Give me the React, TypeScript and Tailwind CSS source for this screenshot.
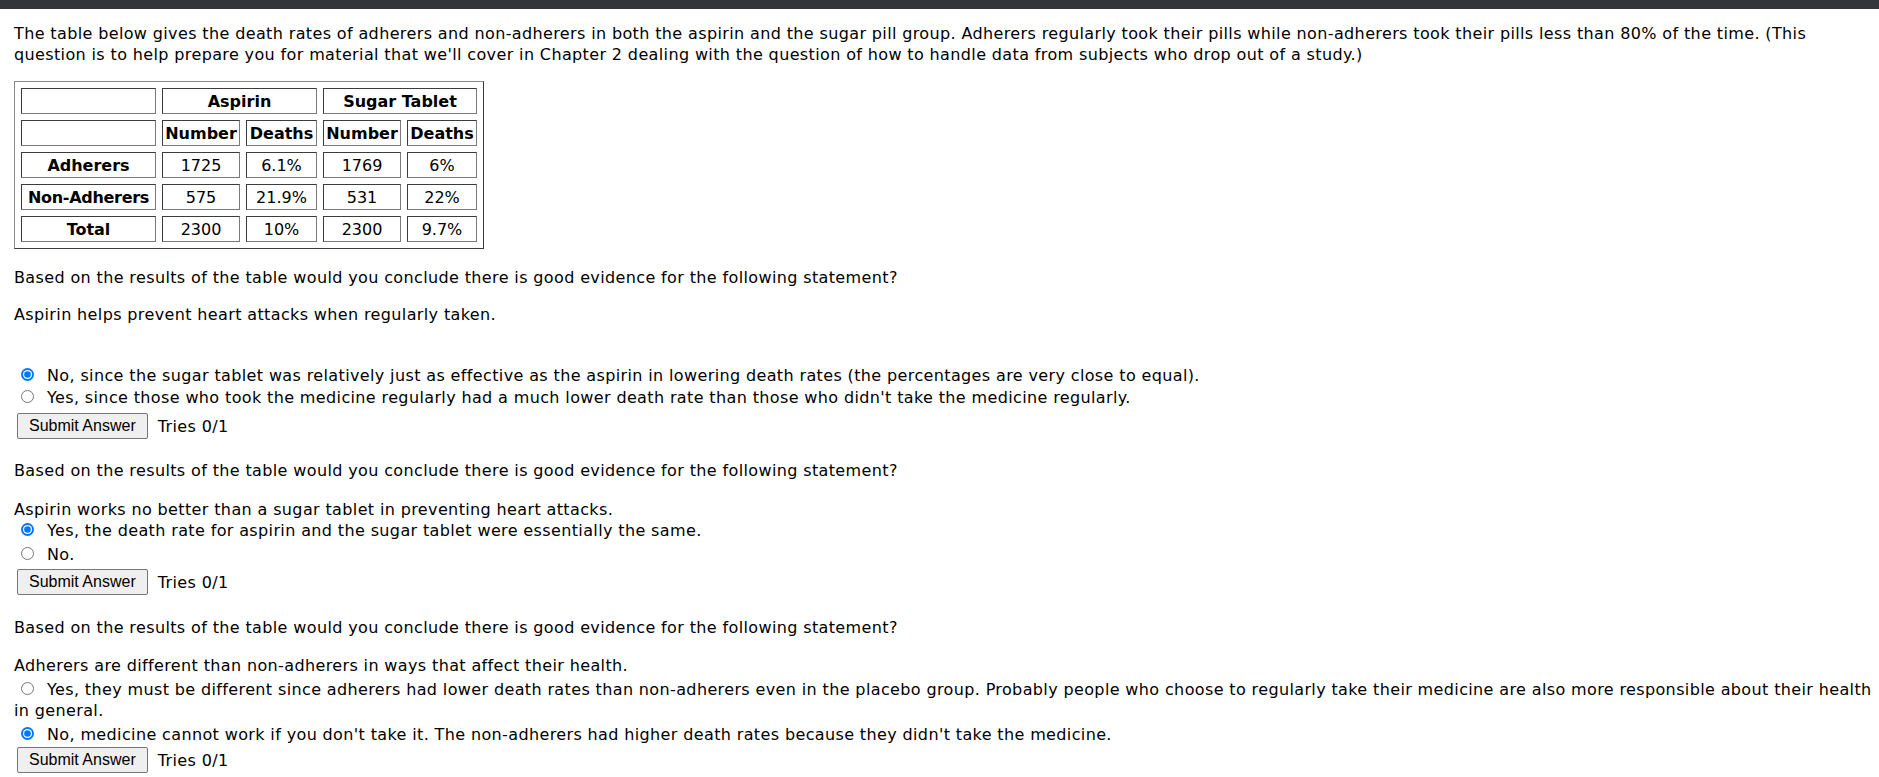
import React from "react";

function Radio({ checked }: { checked?: boolean }) {
  return (
    <span className="inline-block align-baseline w-[13px] h-[13px] ml-[7px] mr-[13px]">
      <svg width="13" height="13" viewBox="0 0 13 13" className="block">
        {checked ? (
          <>
            <circle cx="6.5" cy="6.5" r="6.5" fill="#0075ff" />
            <circle cx="6.5" cy="6.5" r="4.6" fill="#ffffff" />
            <circle cx="6.5" cy="6.5" r="3.3" fill="#0075ff" />
          </>
        ) : (
          <circle cx="6.5" cy="6.5" r="6" fill="#ffffff" stroke="#767676" strokeWidth="1" />
        )}
      </svg>
    </span>
  );
}

function SubmitRow({ className }: { className: string }) {
  return (
    <div className={`flex items-center ${className}`}>
      <button className="ml-[3px] h-[26px] px-[11px] bg-[#efefef] border border-[#767676] rounded-[2px] font-['Liberation_Sans',Arial,sans-serif] text-[16px] leading-none tracking-normal text-black">
        Submit Answer
      </button>
      <span className="ml-[10px]">Tries 0/1</span>
    </div>
  );
}

function Cell({
  children,
  bold,
  span,
}: {
  children?: React.ReactNode;
  bold?: boolean;
  span?: boolean;
}) {
  return (
    <div
      className={`h-[26px] flex items-center justify-center whitespace-nowrap border border-[#3c3c3c] border-r-[#7a7a7a] border-b-[#7a7a7a] ${
        bold ? "font-bold" : ""
      } ${span ? "col-span-2" : ""}`}
    >
      {children}
    </div>
  );
}

export default function App() {
  return (
    <div className="min-h-[777px] bg-white text-black font-['DejaVu_Sans',Verdana,sans-serif] text-[16px] leading-[21px] tracking-[0.37px]">
      <div className="h-[9px] bg-[#35363a]" />
      <div className="pl-[14px] pr-[4px]">
        <p className="mt-[14px]">
          The table below gives the death rates of adherers and non-adherers in both the aspirin and the sugar pill group. Adherers regularly took their pills while non-adherers took their pills less than 80% of the time. (This
          <br />
          question is to help prepare you for material that we'll cover in Chapter 2 dealing with the question of how to handle data from subjects who drop out of a study.)
        </p>

        <div className="mt-[16px] grid w-fit tracking-normal grid-cols-[135px_78px_71px_78px_70px] gap-[6px] p-[6px] border border-[#8a8a8a] border-r-[#3c3c3c] border-b-[#3c3c3c]">
          <Cell />
          <Cell bold span>
            Aspirin
          </Cell>
          <Cell bold span>
            Sugar Tablet
          </Cell>

          <Cell />
          <Cell bold>Number</Cell>
          <Cell bold>Deaths</Cell>
          <Cell bold>Number</Cell>
          <Cell bold>Deaths</Cell>

          <Cell bold>Adherers</Cell>
          <Cell>1725</Cell>
          <Cell>6.1%</Cell>
          <Cell>1769</Cell>
          <Cell>6%</Cell>

          <Cell bold>
            <span className="tracking-[-0.3px]">Non-Adherers</span>
          </Cell>
          <Cell>575</Cell>
          <Cell>21.9%</Cell>
          <Cell>531</Cell>
          <Cell>22%</Cell>

          <Cell bold>Total</Cell>
          <Cell>2300</Cell>
          <Cell>10%</Cell>
          <Cell>2300</Cell>
          <Cell>9.7%</Cell>
        </div>

        {/* Question 1 */}
        <p className="mt-[18px]">
          Based on the results of the table would you conclude there is good evidence for the following statement?
        </p>
        <p className="mt-[16px]">Aspirin helps prevent heart attacks when regularly taken.</p>
        <div className="mt-[40px]">
          <Radio checked />
          No, since the sugar tablet was relatively just as effective as the aspirin in lowering death rates (the percentages are very close to equal).
        </div>
        <div className="mt-[1px]">
          <Radio />
          Yes, since those who took the medicine regularly had a much lower death rate than those who didn't take the medicine regularly.
        </div>
        <SubmitRow className="mt-[5px]" />

        {/* Question 2 */}
        <p className="mt-[21px]">
          Based on the results of the table would you conclude there is good evidence for the following statement?
        </p>
        <p className="mt-[18px]">Aspirin works no better than a sugar tablet in preventing heart attacks.</p>
        <div>
          <Radio checked />
          Yes, the death rate for aspirin and the sugar tablet were essentially the same.
        </div>
        <div className="mt-[3px]">
          <Radio />
          No.
        </div>
        <SubmitRow className="mt-[4px]" />

        {/* Question 3 */}
        <p className="mt-[22px]">
          Based on the results of the table would you conclude there is good evidence for the following statement?
        </p>
        <p className="mt-[17px]">Adherers are different than non-adherers in ways that affect their health.</p>
        <div className="mt-[3px]">
          <Radio />
          Yes, they must be different since adherers had lower death rates than non-adherers even in the placebo group. Probably people who choose to regularly take their medicine are also more responsible about their health
          <br />
          in general.
        </div>
        <div className="mt-[3px]">
          <Radio checked />
          No, medicine cannot work if you don't take it. The non-adherers had higher death rates because they didn't take the medicine.
        </div>
        <SubmitRow className="mt-[2px]" />
      </div>
    </div>
  );
}
